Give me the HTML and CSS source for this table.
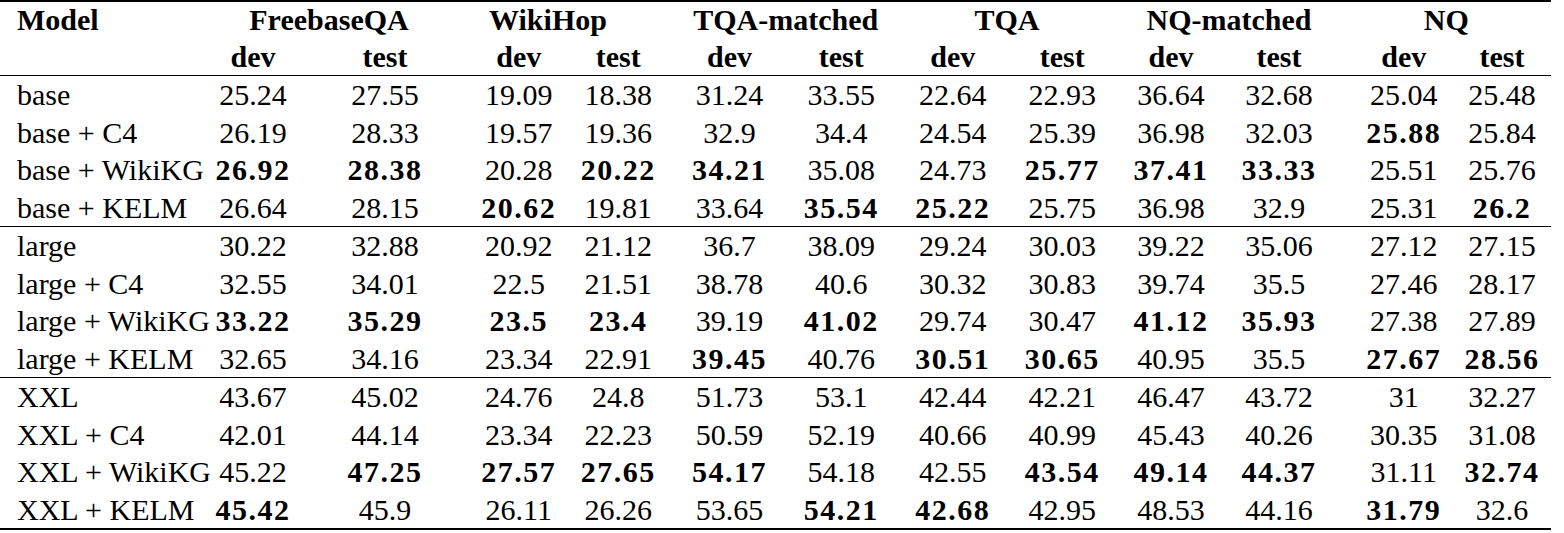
FILE: index.html
```html
<!DOCTYPE html>
<html>
<head>
<meta charset="utf-8">
<title>Results table</title>
<link rel="stylesheet" href="styles.css">
</head>
<body>
<table class="results">
  <colgroup>
    <col class="c-model">
    <col class="c1"><col class="c2"><col class="c3"><col class="c4">
    <col class="c5"><col class="c6"><col class="c7"><col class="c8">
    <col class="c9"><col class="c10"><col class="c11"><col class="c12">
  </colgroup>
  <thead>
    <tr class="h1">
      <th class="label">Model</th>
      <th colspan="2" class="g-fb">FreebaseQA</th>
      <th colspan="2" class="g-wh">WikiHop</th>
      <th colspan="2">TQA-matched</th>
      <th colspan="2">TQA</th>
      <th colspan="2">NQ-matched</th>
      <th colspan="2">NQ</th>
    </tr>
    <tr class="h2">
      <th class="label"></th>
      <th>dev</th><th>test</th><th class="k3">dev</th><th class="k4">test</th><th>dev</th><th>test</th>
      <th>dev</th><th>test</th><th>dev</th><th class="k10">test</th><th class="k11">dev</th><th>test</th>
    </tr>
  </thead>
  <tbody class="group">
    <tr><td class="label">base</td><td>25.24</td><td>27.55</td><td class="k3">19.09</td><td class="k4">18.38</td><td>31.24</td><td>33.55</td><td>22.64</td><td>22.93</td><td>36.64</td><td class="k10">32.68</td><td class="k11">25.04</td><td>25.48</td></tr>
    <tr><td class="label">base + C4</td><td>26.19</td><td>28.33</td><td class="k3">19.57</td><td class="k4">19.36</td><td>32.9</td><td>34.4</td><td>24.54</td><td>25.39</td><td>36.98</td><td class="k10">32.03</td><td class="k11"><b>25.88</b></td><td>25.84</td></tr>
    <tr><td class="label">base + WikiKG</td><td><b>26.92</b></td><td><b>28.38</b></td><td class="k3">20.28</td><td class="k4"><b>20.22</b></td><td><b>34.21</b></td><td>35.08</td><td>24.73</td><td><b>25.77</b></td><td><b>37.41</b></td><td class="k10"><b>33.33</b></td><td class="k11">25.51</td><td>25.76</td></tr>
    <tr><td class="label">base + KELM</td><td>26.64</td><td>28.15</td><td class="k3"><b>20.62</b></td><td class="k4">19.81</td><td>33.64</td><td><b>35.54</b></td><td><b>25.22</b></td><td>25.75</td><td>36.98</td><td class="k10">32.9</td><td class="k11">25.31</td><td><b>26.2</b></td></tr>
  </tbody>
  <tbody class="group">
    <tr><td class="label">large</td><td>30.22</td><td>32.88</td><td class="k3">20.92</td><td class="k4">21.12</td><td>36.7</td><td>38.09</td><td>29.24</td><td>30.03</td><td>39.22</td><td class="k10">35.06</td><td class="k11">27.12</td><td>27.15</td></tr>
    <tr><td class="label">large + C4</td><td>32.55</td><td>34.01</td><td class="k3">22.5</td><td class="k4">21.51</td><td>38.78</td><td>40.6</td><td>30.32</td><td>30.83</td><td>39.74</td><td class="k10">35.5</td><td class="k11">27.46</td><td>28.17</td></tr>
    <tr><td class="label">large + WikiKG</td><td><b>33.22</b></td><td><b>35.29</b></td><td class="k3"><b>23.5</b></td><td class="k4"><b>23.4</b></td><td>39.19</td><td><b>41.02</b></td><td>29.74</td><td>30.47</td><td><b>41.12</b></td><td class="k10"><b>35.93</b></td><td class="k11">27.38</td><td>27.89</td></tr>
    <tr><td class="label">large + KELM</td><td>32.65</td><td>34.16</td><td class="k3">23.34</td><td class="k4">22.91</td><td><b>39.45</b></td><td>40.76</td><td><b>30.51</b></td><td><b>30.65</b></td><td>40.95</td><td class="k10">35.5</td><td class="k11"><b>27.67</b></td><td><b>28.56</b></td></tr>
  </tbody>
  <tbody class="group last">
    <tr><td class="label">XXL</td><td>43.67</td><td>45.02</td><td class="k3">24.76</td><td class="k4">24.8</td><td>51.73</td><td>53.1</td><td>42.44</td><td>42.21</td><td>46.47</td><td class="k10">43.72</td><td class="k11">31</td><td>32.27</td></tr>
    <tr><td class="label">XXL + C4</td><td>42.01</td><td>44.14</td><td class="k3">23.34</td><td class="k4">22.23</td><td>50.59</td><td>52.19</td><td>40.66</td><td>40.99</td><td>45.43</td><td class="k10">40.26</td><td class="k11">30.35</td><td>31.08</td></tr>
    <tr><td class="label">XXL + WikiKG</td><td>45.22</td><td><b>47.25</b></td><td class="k3"><b>27.57</b></td><td class="k4"><b>27.65</b></td><td><b>54.17</b></td><td>54.18</td><td>42.55</td><td><b>43.54</b></td><td><b>49.14</b></td><td class="k10"><b>44.37</b></td><td class="k11">31.11</td><td><b>32.74</b></td></tr>
    <tr><td class="label">XXL + KELM</td><td><b>45.42</b></td><td>45.9</td><td class="k3">26.11</td><td class="k4">26.26</td><td>53.65</td><td><b>54.21</b></td><td><b>42.68</b></td><td>42.95</td><td>48.53</td><td class="k10">44.16</td><td class="k11"><b>31.79</b></td><td>32.6</td></tr>
  </tbody>
</table>
</body>
</html>
```

FILE: styles.css
```css
html, body {
  margin: 0;
  padding: 0;
  background: #ffffff;
}

.results {
  border-collapse: separate;
  border-spacing: 0;
  table-layout: fixed;
  width: 1551px;
  font-family: "Liberation Serif", "Times New Roman", serif;
  font-size: 30px;
  color: #000000;
}

.c-model { width: 188px; }
.c1 { width: 130px; }
.c2 { width: 134px; }
.c3 { width: 116.5px; }
.c4 { width: 105.5px; }
.c5 { width: 111px; }
.c6 { width: 112.5px; }
.c7 { width: 110.5px; }
.c8 { width: 108.5px; }
.c9 { width: 109px; }
.c10 { width: 116px; }
.c11 { width: 111.5px; }
.c12 { width: 98px; }

.results th,
.results td {
  padding: 0;
  text-align: center;
  white-space: nowrap;
  overflow: visible;
  line-height: 37.5px;
}

.results th {
  font-weight: bold;
  line-height: 36.5px;
}

.results .label {
  text-align: left;
  padding-left: 17px;
}

/* per-column nudges so cell contents sit where the source table puts them */
.results .k3 { padding-left: 17px; }
.results .k4 { padding-right: 6px; }
.results .k10 { padding-right: 9px; }
.results .k11 { padding-left: 13px; }

.results .g-fb { padding-left: 18px; }
.results .g-wh { padding-right: 30px; }

.results .h1 th {
  border-top: 2px solid #000000;
}

.results .h2 th {
  border-bottom: 1.5px solid #000000;
}

.results .group tr:last-child td {
  border-bottom: 1.5px solid #000000;
}

.results .group.last tr:last-child td {
  border-bottom: 2px solid #000000;
}

.results td b {
  font-weight: bold;
  letter-spacing: 1.5px;
}
```
